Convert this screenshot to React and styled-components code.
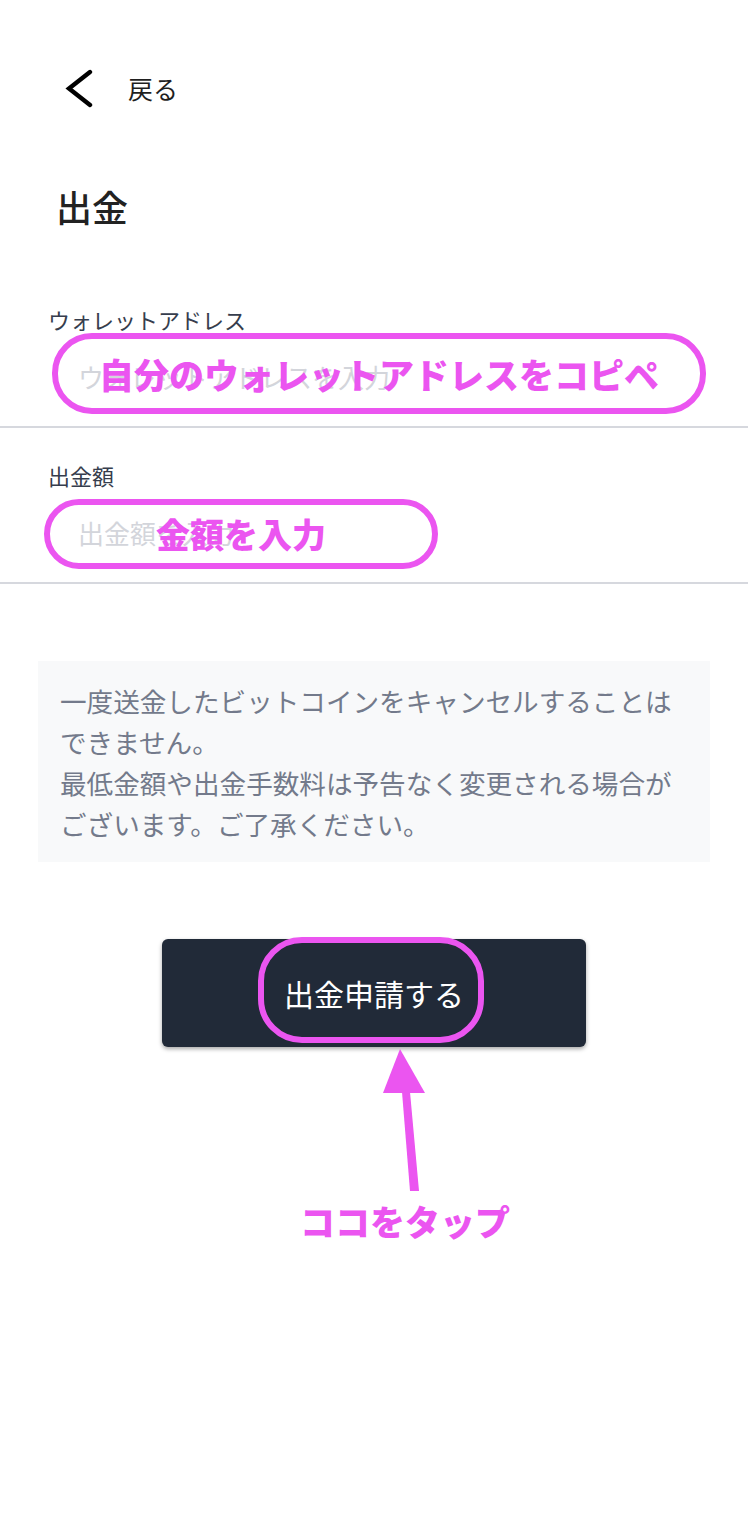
import React from "react";
import styled, { createGlobalStyle } from "styled-components";

const PINK = "#eb55f0";

const Global = createGlobalStyle`
  html, body { margin: 0; padding: 0; background: #fff; }
  body { font-family: "Noto Sans CJK JP", "Noto Sans", sans-serif; }
  * { box-sizing: border-box; }
`;

const Page = styled.div`
  width: 748px;
  min-height: 1536px;
  background: #fff;
  padding-top: 60px;
`;

const Header = styled.div`
  display: flex;
  align-items: center;
  height: 56px;
  padding-left: 62px;
  gap: 34px;
`;

const BackText = styled.span`
  font-size: 25px;
  color: #1f1f1f;
  line-height: 1;
`;

const Title = styled.h1`
  margin: 66px 0 0 56px;
  font-size: 36px;
  font-weight: 500;
  line-height: 48px;
  color: #222;
`;

const Field = styled.div`
  position: relative;
  padding: 32px 48px 20px;
  border-bottom: 2px solid #d6d8de;
  margin-top: ${(p) => p.$mt || 0}px;
`;

const Label = styled.div`
  font-size: 22px;
  line-height: 30px;
  color: #363d4d;
`;

const Input = styled.input`
  display: block;
  width: 100%;
  height: 60px;
  margin-top: 12px;
  border: none;
  outline: none;
  padding: 0 30px;
  font-family: inherit;
  font-size: 26px;
  background: transparent;
  &::placeholder { color: #d3d5db; }
`;

const Ring = styled.div`
  position: absolute;
  top: ${(p) => p.$top}px;
  left: ${(p) => p.$left}px;
  width: ${(p) => p.$w}px;
  height: ${(p) => p.$h}px;
  border: 6px solid ${PINK};
  border-radius: ${(p) => p.$r || 40}px;
  display: flex;
  align-items: center;
  justify-content: center;
  pointer-events: none;
`;

const Note = styled.span`
  font-size: ${(p) => p.$size || 35}px;
  font-weight: 900;
  color: ${PINK};
  line-height: 1;
  white-space: nowrap;
`;

const InfoBox = styled.div`
  margin: 77px 38px 0;
  background: #f8f9fa;
  padding: 19px 0 18px 22px;
  font-size: 26.6px;
  line-height: 41px;
  color: #737a8b;
  white-space: nowrap;
`;

const ButtonArea = styled.div`
  position: relative;
  display: flex;
  justify-content: center;
  margin-top: 77px;
  height: 320px;
`;

const SubmitButton = styled.button`
  position: relative;
  width: 424px;
  height: 108px;
  border: none;
  border-radius: 6px;
  background: #212a38;
  color: #fff;
  font-family: inherit;
  font-size: 30px;
  box-shadow: 0 2px 4px rgba(0, 0, 0, 0.35);
`;

const ArrowNote = styled.div`
  position: absolute;
  top: 110px;
  left: 300px;
  width: 210px;
  display: flex;
  flex-direction: column;
  align-items: center;
`;

const TapNote = styled(Note)`
  margin-top: 10px;
`;

export default function App() {
  return (
    <Page>
      <Global />
      <Header>
        <svg width="32" height="40" viewBox="0 0 32 40">
          <polyline
            points="28,4 7,20.5 28,37"
            fill="none"
            stroke="#000"
            strokeWidth="4.4"
            strokeLinecap="round"
            strokeLinejoin="miter"
          />
        </svg>
        <BackText>戻る</BackText>
      </Header>
      <Title>出金</Title>

      <Field $mt={42}>
        <Label>ウォレットアドレス</Label>
        <Input placeholder="ウォレットアドレスを入力" />
        <Ring $top={61} $left={52} $w={654} $h={81}>
          <Note $size={35}>自分のウォレットアドレスをコピペ</Note>
        </Ring>
      </Field>

      <Field>
        <Label>出金額</Label>
        <Input placeholder="出金額を入力" />
        <Ring $top={71} $left={44} $w={394} $h={70} $r={36}>
          <Note $size={34}>金額を入力</Note>
        </Ring>
      </Field>

      <InfoBox>
        一度送金したビットコインをキャンセルすることは
        <br />
        できません。
        <br />
        最低金額や出金手数料は予告なく変更される場合が
        <br />
        ございます。ご了承ください。
      </InfoBox>

      <ButtonArea>
        <SubmitButton>
          出金申請する
          <Ring $top={-2} $left={96} $w={226} $h={106} $r={44} />
        </SubmitButton>
        <ArrowNote>
          <svg width="60" height="144" viewBox="0 0 60 144">
            <polygon points="25,0 8,44 50,44" fill={PINK} />
            <polygon points="27,43 35,43 44,142 35,142" fill={PINK} />
          </svg>
          <TapNote $size={35}>ココをタップ</TapNote>
        </ArrowNote>
      </ButtonArea>
    </Page>
  );
}
